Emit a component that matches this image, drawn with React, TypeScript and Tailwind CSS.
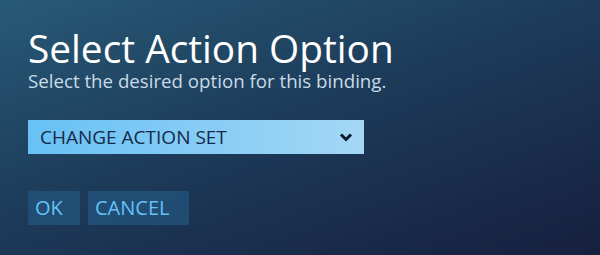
import React from "react";

export default function App() {
  return (
    <div
      className="w-[600px] h-[255px] overflow-hidden bg-[linear-gradient(160deg,#275a76_0%,#1d3c5a_45%,#161f3e_100%)] pl-[28px] pt-[26px]"
      style={{ fontFamily: '"Open Sans", "Noto Sans", sans-serif' }}
    >
      <div className="text-[38.8px] leading-[44px] text-white whitespace-nowrap">Select Action Option</div>
      <div className="text-[18.7px] leading-[22px] text-[#c7dbe8] whitespace-nowrap">
        Select the desired option for this binding.
      </div>
      <div className="mt-[28px] w-[336px] h-[34px] flex items-center justify-between pl-[12px] pr-[11px] bg-[linear-gradient(90deg,#67c1f5_0%,#a4d7f5_100%)]">
        <span className="text-[19px] text-[#15294a] whitespace-nowrap">CHANGE ACTION SET</span>
        <svg width="14" height="10" viewBox="0 0 14 10">
          <path d="M2 2.5 L7 7.5 L12 2.5" stroke="#0e1a2b" strokeWidth="3" fill="none" />
        </svg>
      </div>
      <div className="mt-[37px] flex gap-[8px]">
        <button className="h-[34px] w-[52px] bg-[#22537a]/80 text-[#67c1f5] text-[20px] pl-[7px] text-left whitespace-nowrap">OK</button>
        <button className="h-[34px] w-[101px] bg-[#22537a]/80 text-[#67c1f5] text-[20px] pl-[7px] text-left whitespace-nowrap">CANCEL</button>
      </div>
    </div>
  );
}
